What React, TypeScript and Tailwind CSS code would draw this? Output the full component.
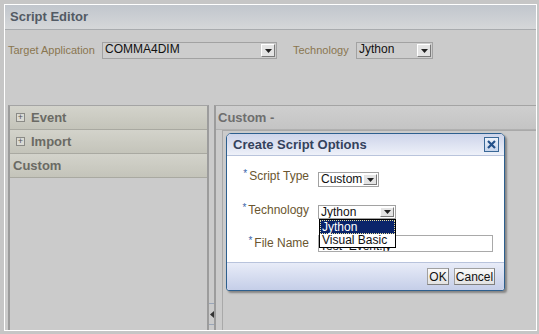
import React from "react";

const sans = "font-['Liberation_Sans',Arial,sans-serif]";

function ArrowButton({ className = "" }: { className?: string }) {
  return (
    <div
      className={`flex h-full w-[14px] items-center justify-center border border-t-white border-l-white border-r-[#7a7a7a] border-b-[#7a7a7a] bg-[#e4e4e4] ${className}`}
    >
      <svg width="7" height="4" viewBox="0 0 7 4">
        <path d="M0 0 L7 0 L3.5 4 Z" fill="#222" />
      </svg>
    </div>
  );
}

function FakeSelect({ value, width, height, bg = "bg-white" }: { value: string; width: string; height: string; bg?: string }) {
  return (
    <div className={`flex items-stretch border border-[#a2a2a2] ${bg} ${width} ${height}`}>
      <span className="flex-1 overflow-hidden whitespace-nowrap pl-[2px] text-[12px] leading-[13px] text-[#111]">{value}</span>
      <div className="p-[1px]">
        <ArrowButton />
      </div>
    </div>
  );
}

function PanelRow({ label, plus }: { label: string; plus?: boolean }) {
  return (
    <div className="flex h-[24px] items-center gap-[6px] border-b border-[#a9a9a1] bg-gradient-to-b from-[#d3d3cb] to-[#c4c4ba] px-[6px] text-[13px] font-bold text-[#6a6a64]">
      {plus && (
        <span className="flex h-[9px] w-[9px] items-center justify-center border border-[#8a8a86] bg-[#dadad4] text-[9px] leading-none font-normal text-[#555]">
          +
        </span>
      )}
      <span className={plus ? "" : "-ml-[3px]"}>{label}</span>
    </div>
  );
}

function Label({ text, shift }: { text: string; shift: string }) {
  return (
    <div className={`flex items-start justify-end text-[12px] leading-[14px] text-[#6a5630] ${shift}`}>
      <span className="mr-[2px] text-[10px] leading-[10px] text-[#3b66aa]">*</span>
      <span>{text}</span>
    </div>
  );
}

export default function App() {
  return (
    <div className={`h-[334px] w-[539px] bg-[#c6c6c6] pb-[3px] pl-[4px] pr-[2px] pt-[4px] ${sans}`}>
      <div className="relative flex h-full flex-col border border-white bg-[#cbcbcb]">
        <div className="flex h-[25px] items-center border-b border-[#a8abae] bg-gradient-to-b from-[#c1c6cd] to-[#d5d7d9] pl-[5px] text-[13px] font-bold text-[#525a64]">
          Script Editor
        </div>

        <div className="mt-[12px] flex h-[17px] items-center pl-[3px] text-[11px]">
          <span className="w-[94px] text-[#8a7650]">Target Application</span>
          <FakeSelect value="COMMA4DIM" width="w-[175px]" height="h-[17px]" bg="bg-[#cdcdcd]" />
          <span className="ml-[16px] w-[63px] text-[#8a7650]">Technology</span>
          <FakeSelect value="Jython" width="w-[77px]" height="h-[17px]" bg="bg-[#cdcdcd]" />
        </div>

        <div className="mt-[46px] flex flex-1">
          <div className="ml-[3px] flex w-[201px] flex-col border-l-2 border-r-2 border-t border-[#9c9c9c] border-t-[#a4a4a4]">
            <PanelRow label="Event" plus />
            <PanelRow label="Import" plus />
            <PanelRow label="Custom" />
            <div className="flex-1 bg-[#cbcbcb]" />
          </div>

          <div className="flex w-[5px] flex-col justify-end pb-[5px]">
            <div className="flex h-[22px] items-center justify-center border-y border-[#9aa6b8]">
              <svg width="4" height="7" viewBox="0 0 4 7">
                <path d="M4 0 L0 3.5 L4 7 Z" fill="#333" />
              </svg>
            </div>
          </div>

          <div className="flex flex-1 flex-col border-l-2 border-t border-[#9c9c9c] border-t-[#a4a4a4]">
            <div className="flex h-[24px] items-center border-b border-[#b0b0b0] bg-gradient-to-b from-[#cfcfcf] to-[#c4c4c4] pl-[2px] text-[13px] font-bold text-[#6e6e6e]">
              Custom -
            </div>
            <div className="flex flex-1 pl-[6px]">
              <div className="flex-1 border-l border-t border-[#a9a9a9] bg-[#cbcbcb]" />
            </div>
          </div>
        </div>

        {/* Create Script Options dialog */}
        <div className="absolute left-[221px] top-[128px] flex h-[158px] w-[279px] flex-col overflow-visible rounded-b-[3px] rounded-t-[5px] border border-[#2d5f8e] bg-white shadow-[2px_2px_2px_rgba(0,0,0,0.35)]">
          <div className="flex h-[22px] items-center justify-between rounded-t-[4px] border-b border-[#b9c4dc] bg-gradient-to-b from-[#cdd4ea] to-[#eef1f9] pl-[6px] pr-[5px]">
            <span className="text-[13px] font-bold text-[#34425c]">Create Script Options</span>
            <div className="flex h-[15px] w-[15px] items-center justify-center border border-[#3a6897] bg-gradient-to-b from-[#eef3fb] to-[#c7d5ec]">
              <svg width="9" height="9" viewBox="0 0 9 9">
                <path d="M1 1 L8 8 M8 1 L1 8" stroke="#24518a" strokeWidth="2.2" />
              </svg>
            </div>
          </div>

          <div className="flex flex-1 flex-col pt-[16px]">
            <div className="flex h-[15px] items-center">
              <div className="w-[82px]">
                <Label text="Script Type" shift="-mt-[7px]" />
              </div>
              <div className="ml-[9px]">
                <FakeSelect value="Custom" width="w-[61px]" height="h-[15px]" />
              </div>
            </div>

            <div className="relative mt-[18px] flex h-[14px] items-center">
              <div className="w-[82px]">
                <Label text="Technology" shift="-mt-[5px]" />
              </div>
              <div className="relative ml-[9px]">
                <FakeSelect value="Jython" width="w-[78px]" height="h-[14px]" />
                <div className="absolute left-[1px] top-[14px] z-10 w-[77px] border border-black bg-white text-[12px] leading-[12px]">
                  <div className="border border-dotted border-[#e8e0a0] bg-[#0a246a] pl-[1px] text-white">Jython</div>
                  <div className="pl-[2px] pb-[1px] text-[#111]">Visual Basic</div>
                </div>
              </div>
            </div>

            <div className="mt-[16px] flex h-[17px] items-center">
              <div className="w-[82px]">
                <Label text="File Name" shift="-mt-[1px]" />
              </div>
              <div className="ml-[9px] flex h-[17px] w-[175px] items-end overflow-hidden border border-[#a9a9a9] bg-white pl-[1px] text-[12px] leading-[12px] text-[#111]">
                <span className="-mb-[1px]">Test_Event.jy</span>
              </div>
            </div>
          </div>

          <div className="flex h-[28px] items-center justify-end gap-[5px] rounded-b-[3px] border-t border-[#b8c3dc] bg-gradient-to-b from-[#e8ecf8] to-[#c5cee8] pr-[9px]">
            <button className="h-[17px] w-[22px] border border-[#a0a0a0] border-b-[#808080] border-r-[#808080] bg-gradient-to-b from-[#fafafa] to-[#e2e2e2] text-[12px] leading-[14px] text-[#111]">
              OK
            </button>
            <button className="h-[17px] w-[41px] border border-[#a0a0a0] border-b-[#808080] border-r-[#808080] bg-gradient-to-b from-[#fafafa] to-[#e2e2e2] text-[12px] leading-[14px] text-[#111]">
              Cancel
            </button>
          </div>
        </div>
      </div>
    </div>
  );
}
